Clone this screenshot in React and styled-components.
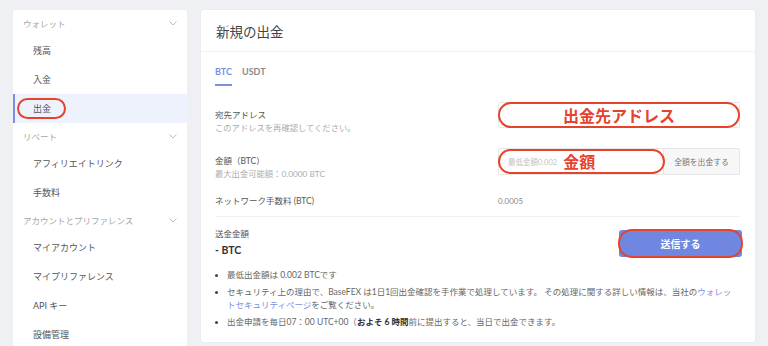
import React from "react";
import styled, { createGlobalStyle } from "styled-components";

const GlobalStyle = createGlobalStyle`
  html, body { margin: 0; padding: 0; background: #eef0f3; }
  body { font-family: Lato, "Noto Sans CJK JP", sans-serif; }
  * { box-sizing: border-box; }
`;

const Page = styled.div`
  display: flex;
  align-items: flex-start;
  gap: 14px;
  padding: 10px 13px 0 13px;
  height: 346px;
  overflow: hidden;
`;

const Sidebar = styled.nav`
  width: 174px;
  height: 350px;
  flex: none;
  background: #fff;
  border-radius: 3px;
`;

const GroupHeader = styled.div`
  height: 26px;
  display: flex;
  align-items: center;
  justify-content: space-between;
  padding: 0 10px 0 10px;
  font-size: 8.5px;
  color: #a6a6a6;
`;

const NavItem = styled.div`
  height: 29px;
  display: flex;
  align-items: center;
  padding-left: ${(p) => (p.$active ? "18px" : "20px")};
  font-size: 9px;
  color: #555;
  background: ${(p) => (p.$active ? "#eef2fc" : "transparent")};
  border-left: ${(p) => (p.$active ? "2px solid #7b8fe0" : "none")};
`;

const Ring = styled.span`
  position: relative;
  &::after {
    content: "";
    position: absolute;
    left: -16px;
    right: -15px;
    top: -4px;
    bottom: -4px;
    border: 2.5px solid #e5432b;
    border-radius: 12px;
  }
`;

const Card = styled.main`
  width: 554px;
  height: 332px;
  flex: none;
  background: #fff;
  border-radius: 3px;
  box-shadow: 0 0 2px rgba(0, 0, 0, 0.06);
  overflow: hidden;
`;

const CardHeader = styled.header`
  height: 42px;
  display: flex;
  align-items: center;
  padding: 0 15px;
  border-bottom: 1px solid #f0f1f3;
  font-size: 13.5px;
  color: #444;
`;

const Body = styled.div`
  padding: 14px 15px 0 14px;
`;

const Tabs = styled.div`
  display: flex;
  gap: 10px;
`;

const Tab = styled.div`
  font-size: 9px;
  font-weight: 700;
  line-height: 12px;
  padding-bottom: 6px;
  border-bottom: 2px solid ${(p) => (p.$active ? "#7b8fe0" : "transparent")};
  color: ${(p) => (p.$active ? "#7b8fe0" : "#8a8a8a")};
`;

const FormRow = styled.div`
  display: grid;
  grid-template-columns: 283px 242px;
  align-items: start;
  margin-top: ${(p) => p.$mt}px;
`;

const LabelBlock = styled.div`
  padding-top: ${(p) => p.$pt ?? 7}px;
`;

const Label = styled.div`
  font-size: 8.5px;
  line-height: 13px;
  color: #555;
`;

const SubLabel = styled.div`
  font-size: 8.3px;
  line-height: 13px;
  color: #adadad;
`;

const AddressBox = styled.div`
  position: relative;
  height: 26px;
  border: 1px solid #e6e6e6;
  border-radius: 2px;
  display: flex;
  align-items: center;
  justify-content: center;
  &::after {
    content: "";
    position: absolute;
    inset: -1px;
    border: 2.5px solid #e5432b;
    border-radius: 13px;
  }
`;

const Annotation = styled.span`
  font-size: 16px;
  font-weight: 700;
  color: #e5432b;
  font-family: "Noto Sans CJK JP", sans-serif;
  line-height: 1;
`;

const AmountGroup = styled.div`
  display: flex;
  height: 27px;
`;

const AmountInput = styled.div`
  position: relative;
  flex: 1;
  border: 1px solid #e6e6e6;
  border-right: none;
  border-radius: 2px 0 0 2px;
  display: flex;
  align-items: center;
  gap: 6px;
  padding-left: 9px;
  &::after {
    content: "";
    position: absolute;
    inset: 0 -2px 0 -1px;
    border: 2.5px solid #e5432b;
    border-radius: 13px;
  }
`;

const Placeholder = styled.span`
  font-size: 7.5px;
  color: #c2c2c2;
`;

const MaxButton = styled.div`
  width: 77px;
  border: 1px solid #e6e6e6;
  background: #f7f7f7;
  border-radius: 0 2px 2px 0;
  display: flex;
  align-items: center;
  justify-content: center;
  font-size: 7.8px;
  color: #777;
`;

const Value = styled.div`
  font-size: 8px;
  line-height: 13px;
  color: #888;
  padding-top: 8px;
`;

const Divider = styled.hr`
  border: none;
  border-top: 1px solid #f0f1f3;
  margin: 8px 0 0 0;
`;

const TotalRow = styled.div`
  display: flex;
  justify-content: space-between;
  align-items: flex-start;
  margin-top: 11px;
`;

const Amount = styled.div`
  font-size: 10.5px;
  font-weight: 700;
  line-height: 14px;
  color: #333;
  margin-top: 2px;
`;

const SubmitButton = styled.button`
  position: relative;
  width: 123px;
  height: 27px;
  margin-top: 1.5px;
  margin-right: -2px;
  border: none;
  border-radius: 3px;
  background: #6f87e0;
  color: #fff;
  font-family: "Noto Sans CJK JP", sans-serif;
  font-size: 10px;
  font-weight: 700;
  &::after {
    content: "";
    position: absolute;
    inset: -1px;
    border: 2.5px solid #e5432b;
    border-radius: 14px;
  }
`;

const Notes = styled.ul`
  margin: 12px 0 0 0;
  padding: 0 0 0 12px;
  width: 519px;
`;

const Note = styled.li`
  font-size: 8.5px;
  line-height: 13px;
  color: #666;
  margin-bottom: 4px;
  &::marker { font-size: 8px; color: #444; }
`;

const Link = styled.span`
  color: #7b8fe0;
`;

const Strong = styled.b`
  color: #333;
`;

const Chevron = () => (
  <svg width="8" height="5" viewBox="0 0 8 5" fill="none">
    <path d="M0.5 0.5 L4 4 L7.5 0.5" stroke="#b5b5b5" strokeWidth="0.9" />
  </svg>
);

export default function App() {
  return (
    <>
      <GlobalStyle />
      <Page>
        <Sidebar>
          <GroupHeader>ウォレット<Chevron /></GroupHeader>
          <NavItem>残高</NavItem>
          <NavItem>入金</NavItem>
          <NavItem $active><Ring>出金</Ring></NavItem>
          <GroupHeader>リベート<Chevron /></GroupHeader>
          <NavItem>アフィリエイトリンク</NavItem>
          <NavItem>手数料</NavItem>
          <GroupHeader>アカウントとプリファレンス<Chevron /></GroupHeader>
          <NavItem>マイアカウント</NavItem>
          <NavItem>マイプリファレンス</NavItem>
          <NavItem>API キー</NavItem>
          <NavItem>設備管理</NavItem>
        </Sidebar>
        <Card>
          <CardHeader>新規の出金</CardHeader>
          <Body>
            <Tabs>
              <Tab $active>BTC</Tab>
              <Tab>USDT</Tab>
            </Tabs>
            <FormRow $mt={16}>
              <LabelBlock $pt={6.5}>
                <Label>宛先アドレス</Label>
                <SubLabel>このアドレスを再確認してください。</SubLabel>
              </LabelBlock>
              <AddressBox>
                <Annotation>出金先アドレス</Annotation>
              </AddressBox>
            </FormRow>
            <FormRow $mt={13}>
              <LabelBlock $pt={7.5}>
                <Label>金額（BTC）</Label>
                <SubLabel>最大出金可能額：0.0000 BTC</SubLabel>
              </LabelBlock>
              <AmountGroup>
                <AmountInput>
                  <Placeholder>最低金額0.002</Placeholder>
                  <Annotation>金額</Annotation>
                </AmountInput>
                <MaxButton>全額を出金する</MaxButton>
              </AmountGroup>
            </FormRow>
            <FormRow $mt={6}>
              <LabelBlock $pt={7.5}>
                <Label>ネットワーク手数料 (BTC)</Label>
              </LabelBlock>
              <Value>0.0005</Value>
            </FormRow>
            <Divider />
            <TotalRow>
              <div>
                <Label>送金金額</Label>
                <Amount>- BTC</Amount>
              </div>
              <SubmitButton>送信する</SubmitButton>
            </TotalRow>
            <Notes>
              <Note>最低出金額は 0.002 BTCです</Note>
              <Note>
                セキュリティ上の理由で、BaseFEX は1日1回出金確認を手作業で処理しています。 その処理に関する詳しい情報は、当社の<Link>ウォレットセキュリティページ</Link>をご覧ください。
              </Note>
              <Note>
                出金申請を毎日07：00 UTC+00（<Strong>およそ 6 時間</Strong>前に提出すると、当日で出金できます。
              </Note>
            </Notes>
          </Body>
        </Card>
      </Page>
    </>
  );
}
